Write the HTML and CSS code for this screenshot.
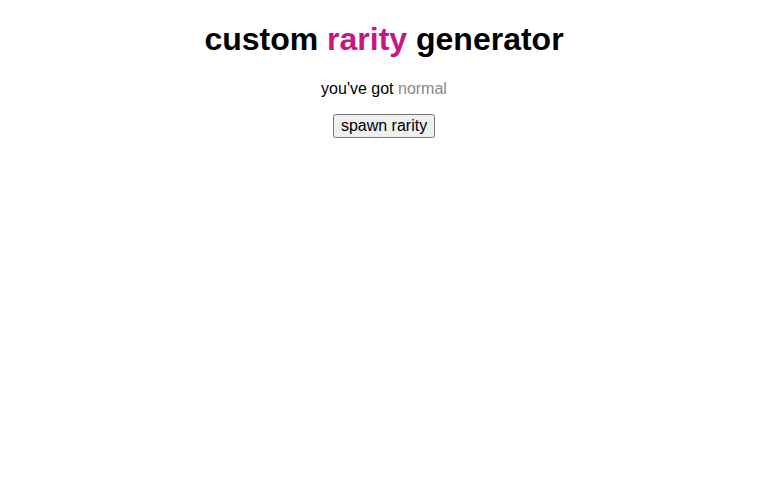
FILE: index.html
```html
<!DOCTYPE html>
<html lang="en">
<head>
    <meta charset="UTF-8">
    <meta name="viewport" content="width=device-width, initial-scale=1.0">
    <title>Custom Rarity Generator</title>
    <link rel="stylesheet" href="styles.css">
</head>
<body>
    <h1 class="title">custom <span class="rarity-word">rarity</span> generator</h1>
    <p class="result">you've got <span class="rarity" id="rarity">normal</span></p>
    <div class="actions">
        <button class="spawn-btn" id="spawnBtn">spawn rarity</button>
    </div>
</body>
</html>
```

FILE: styles.css
```css
body {
    margin: 0;
    font-family: 'Liberation Sans', Arial, sans-serif;
    text-align: center;
    color: #000;
    background: #fff;
}

.title {
    font-size: 32px;
    font-weight: 700;
}

.rarity-word {
    color: #c71585;
}

.result {
    font-size: 16px;
}

.rarity {
    color: #888;
}

.spawn-btn {
    font-family: 'Liberation Sans', Arial, sans-serif;
    font-size: 16px;
}
```
